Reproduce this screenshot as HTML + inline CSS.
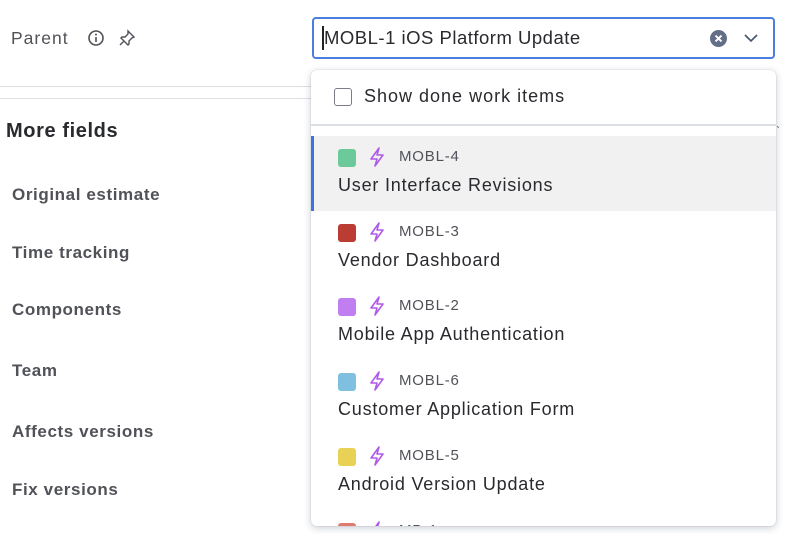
<!DOCTYPE html>
<html><head><style>
body{margin:0;width:790px;height:534px;overflow:hidden;background:#fff;font-family:"Liberation Sans",sans-serif;color:#292a2e;position:relative}
.a{position:absolute}
.lbl{position:absolute;left:12px;font-size:17px;font-weight:bold;color:#505258;letter-spacing:.6px}
.item{position:absolute;left:311px;width:465px;height:75px}
.sq{position:absolute;left:27px;top:13px;width:18px;height:18px;border-radius:3px}
.bolt{position:absolute;left:56px;top:10px}
.id{position:absolute;left:88px;top:12px;font-size:15px;color:#505258;letter-spacing:.8px}
.tt{position:absolute;left:27px;top:39px;font-size:18px;color:#292a2e;letter-spacing:.8px}
</style></head><body>
<div class="a" style="left:11px;top:28px;font-size:17.5px;color:#505258;letter-spacing:1px">Parent</div>
<svg class="a" style="left:87px;top:29px" width="18" height="18" viewBox="0 0 18 18"><circle cx="9" cy="9" r="7" fill="none" stroke="#505258" stroke-width="1.6"/><rect x="8.2" y="8" width="1.6" height="5" fill="#505258"/><circle cx="9" cy="5.5" r="1" fill="#505258"/></svg>
<svg class="a" style="left:118px;top:29px" width="18" height="18" viewBox="0 0 18 18" fill="none" stroke="#505258" stroke-width="1.4"><path d="M10 2l6 6-2 1-3 3 0 3-1 1-7-7 1-1h3l3-3z"/><path d="M5.5 12.5L2 16"/></svg>
<div class="a" style="left:0;top:86px;width:311px;height:1px;background:#dcdfe4"></div>
<div class="a" style="left:0;top:98px;width:311px;height:1px;background:#dcdfe4"></div>
<div class="a" style="left:6px;top:120px;font-size:20px;font-weight:bold;color:#292a2e;letter-spacing:.6px">More fields</div>
<div class="lbl" style="top:185px">Original estimate</div>
<div class="lbl" style="top:243px">Time tracking</div>
<div class="lbl" style="top:300px">Components</div>
<div class="lbl" style="top:361px">Team</div>
<div class="lbl" style="top:422px">Affects versions</div>
<div class="lbl" style="top:480px">Fix versions</div>

<div class="a" style="left:312px;top:17px;width:459px;height:38px;border:2px solid #4a7fe0;border-radius:4px"></div>
<div class="a" style="left:322px;top:26px;width:2px;height:24px;background:#222"></div>
<div class="a" style="left:324px;top:27px;font-size:18.5px;color:#292a2e;letter-spacing:.5px">MOBL-1 iOS Platform Update</div>
<svg class="a" style="left:710px;top:30px" width="17" height="17" viewBox="0 0 16 16"><circle cx="8" cy="8" r="8" fill="#626f86"/><path d="M5.2 5.2l5.6 5.6M10.8 5.2l-5.6 5.6" stroke="#fff" stroke-width="1.8"/></svg>
<svg class="a" style="left:743px;top:32px" width="16" height="12" viewBox="0 0 16 12"><path d="M2 3l6 6 6-6" fill="none" stroke="#44546f" stroke-width="1.6"/></svg>

<div class="a" style="left:311px;top:70px;width:465px;height:456px;background:#fff;border-radius:6px;box-shadow:0 2px 8px rgba(9,30,66,.22),0 0 1px rgba(9,30,66,.3);overflow:hidden">
<div class="a" style="left:23px;top:18px;width:16px;height:16px;border:1.5px solid #7a7d85;border-radius:3px"></div>
<div class="a" style="left:53px;top:16px;font-size:18px;color:#292a2e;letter-spacing:1px">Show done work items</div>
<div class="a" style="left:0;top:54px;width:465px;height:2px;background:#dcdfe4"></div>
</div>
<div class="a" style="left:776px;top:124px;font-size:12px;color:#505258">ˋ</div>

<div class="item" style="top:136px;background:#f1f1f2;border-left:3px solid #3b73e0;width:462px"><div class="sq" style="background:#6cc99a;left:24px"></div><svg class="bolt" style="left:53px" width="20" height="22" viewBox="0 0 20 22"><path d="M12 2L4 13h6l-2 7 8-11h-6z" fill="none" stroke="#b05ae8" stroke-width="1.6" stroke-linejoin="round"/></svg><div class="id" style="left:85px">MOBL-4</div><div class="tt" style="left:24px">User Interface Revisions</div></div>
<div class="item" style="top:211px"><div class="sq" style="background:#bb3c33"></div><svg class="bolt" width="20" height="22" viewBox="0 0 20 22"><path d="M12 2L4 13h6l-2 7 8-11h-6z" fill="none" stroke="#b05ae8" stroke-width="1.6" stroke-linejoin="round"/></svg><div class="id">MOBL-3</div><div class="tt">Vendor Dashboard</div></div>
<div class="item" style="top:285px"><div class="sq" style="background:#c07ef0"></div><svg class="bolt" width="20" height="22" viewBox="0 0 20 22"><path d="M12 2L4 13h6l-2 7 8-11h-6z" fill="none" stroke="#b05ae8" stroke-width="1.6" stroke-linejoin="round"/></svg><div class="id">MOBL-2</div><div class="tt">Mobile App Authentication</div></div>
<div class="item" style="top:360px"><div class="sq" style="background:#7fc0e0"></div><svg class="bolt" width="20" height="22" viewBox="0 0 20 22"><path d="M12 2L4 13h6l-2 7 8-11h-6z" fill="none" stroke="#b05ae8" stroke-width="1.6" stroke-linejoin="round"/></svg><div class="id">MOBL-6</div><div class="tt">Customer Application Form</div></div>
<div class="item" style="top:435px"><div class="sq" style="background:#e8d154"></div><svg class="bolt" width="20" height="22" viewBox="0 0 20 22"><path d="M12 2L4 13h6l-2 7 8-11h-6z" fill="none" stroke="#b05ae8" stroke-width="1.6" stroke-linejoin="round"/></svg><div class="id">MOBL-5</div><div class="tt">Android Version Update</div></div>
<div class="item" style="top:510px;height:16px;overflow:hidden"><div class="sq" style="background:#e07a6e"></div><svg class="bolt" width="20" height="22" viewBox="0 0 20 22"><path d="M12 2L4 13h6l-2 7 8-11h-6z" fill="none" stroke="#b05ae8" stroke-width="1.6" stroke-linejoin="round"/></svg><div class="id">MB-1</div></div>
</body></html>
